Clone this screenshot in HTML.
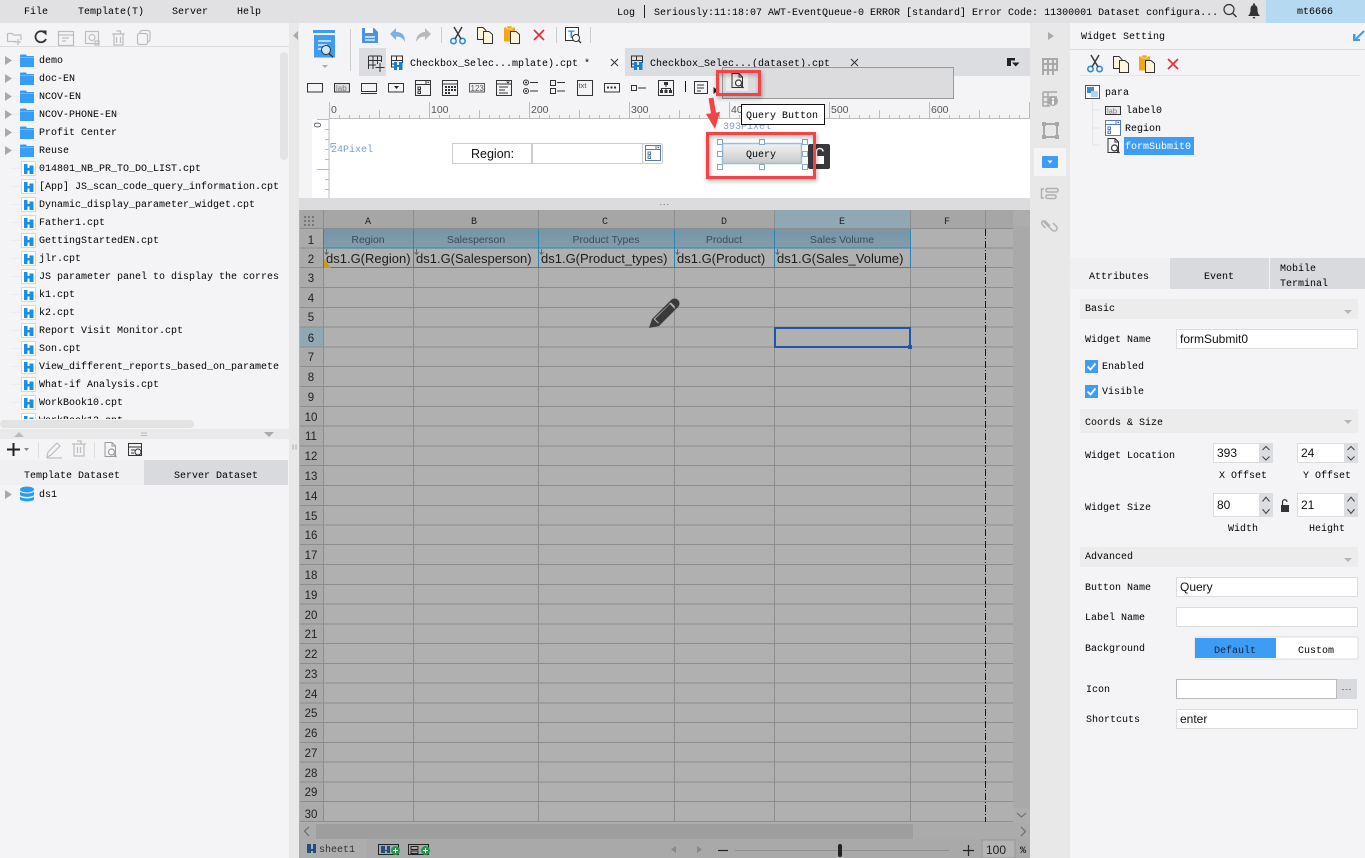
<!DOCTYPE html>
<html><head><meta charset="utf-8"><title>Designer</title>
<style>
html,body{margin:0;padding:0;width:1365px;height:858px;overflow:hidden;background:#f4f4f7}
svg{display:block;position:absolute;left:0;top:0}
.m{font-family:"Liberation Mono",monospace;font-size:10px;fill:#000;white-space:pre;transform:translateY(-1px)}
.s{font-family:"Liberation Sans",sans-serif;font-size:12px;fill:#111}
.r{font-family:"Liberation Sans",sans-serif;font-size:11.5px;fill:#222;text-anchor:middle}
.h{font-family:"Liberation Sans",sans-serif;font-size:10.5px;fill:#3b4c60;text-anchor:middle}
.c{font-family:"Liberation Sans",sans-serif;font-size:13px;fill:#1c1c1c}
.g{fill:none;stroke:#bdbdbd;stroke-width:1.2}
.g2{fill:none;stroke:#a8a8a8;stroke-width:2}
.sh{filter:drop-shadow(1px 2px 2px rgba(0,0,0,.35))}
</style></head><body>
<svg width="1365" height="858" viewBox="0 0 1365 858" xmlns="http://www.w3.org/2000/svg">
<defs>
<pattern id="tx" x="329" y="102" width="100" height="17" patternUnits="userSpaceOnUse">
<path d="M.5 0V17M10.5 13V17M20.5 13V17M30.5 13V17M40.5 13V17M50.5 8V17M60.5 13V17M70.5 13V17M80.5 13V17M90.5 13V17" stroke="#bbb" fill="none"/>
</pattern>
<pattern id="ty" x="312" y="119" width="17" height="50" patternUnits="userSpaceOnUse">
<path d="M13 .5H17M13 10.5H17M13 20.5H17M13 30.5H17M13 40.5H17" stroke="#bbb" fill="none"/><path d="M5 .5H17" stroke="#bbb"/>
</pattern>
<g id="fold"><path d="M0 2.5a1 1 0 0 1 1-1h5l1 1.5h6.500a.5 .5 0 0 1 .5 .5V14H0z" fill="#379df5"/><path d="M0 4.500H14" stroke="#8ccaf9" stroke-width=".7"/></g>
<path id="tri" d="M0 0L7 4.500L0 9z" fill="#a9a9a9"/>
<g id="cpt"><rect x=".5" y=".5" width="14" height="14" fill="#fff" stroke="#d8d8d8"/><path d="M3 3H6.500V7H8.500V4.500H12.500V13H8.500V9.500H6.500V13H3z" fill="#1b8fe8"/></g>
<g id="qry"><path d="M1 .5H8L11.500 4V14.500H1z" fill="none" stroke="#333"/><path d="M8 .5V4H11.500" fill="none" stroke="#333"/><circle cx="7.500" cy="10" r="3" fill="#fff" stroke="#333" stroke-width="1.200"/><path d="M9.800 12.300L12.500 15" stroke="#333" stroke-width="1.400"/></g>
<g id="cut"><circle cx="3.500" cy="14" r="2.700" fill="none" stroke="#2e8be0" stroke-width="1.600"/><circle cx="12.500" cy="14" r="2.700" fill="none" stroke="#2e8be0" stroke-width="1.600"/><path d="M5 12L12 0M11 12L4 0" stroke="#3c3c3c" stroke-width="1.500" fill="none"/></g>
<g id="copy"><path d="M.5 .5H6L9 3.500V12.500H.5z" fill="#fff6df" stroke="#333"/><path d="M6.500 4.500H12L15.500 7.500V16.500H6.500z" fill="#fff6df" stroke="#333"/></g>
<g id="paste"><rect x="0" y="1.500" width="11" height="14" fill="#f3a712"/><rect x="3" y="0" width="5" height="3" fill="#f3a712" stroke="#fff" stroke-width=".5"/><path d="M6.500 5.500H12L15.500 8.500V17.500H6.500z" fill="#fff6df" stroke="#333"/></g>
<path id="x" d="M1 1L11 11M11 1L1 11" stroke="#ee2b2b" stroke-width="1.600" fill="none"/>
<g id="sp"><rect width="14" height="20" fill="#dcdde0"/><path d="M3.500 7L7 3.500L10.500 7M3.500 13.500L7 17L10.500 13.500" stroke="#444" fill="none"/></g>
<g id="wid"><rect x=".5" y=".5" width="15" height="15" fill="#fff" stroke="#5a7cad"/><path d="M.5 4.500H15.500M11 .5V4.500" stroke="#5a7cad" fill="none"/><path d="M12 1.800H14.500L13.250 3.400z" fill="#2c4f88"/><rect x="3" y="7" width="2.500" height="2.500" fill="none" stroke="#5a7cad"/><rect x="3" y="11" width="2.500" height="2.500" fill="none" stroke="#5a7cad"/></g>
<g id="hd"><rect width="5" height="5" x=".5" y=".5" fill="#fff" stroke="#88a8c8"/></g>
<g id="chk"><rect width="13" height="13" fill="#3f9cf5"/><path d="M2.500 6.500L5.500 9.500L10.500 3.500" stroke="#fff" stroke-width="1.800" fill="none"/></g>
</defs>

<!-- base -->
<rect width="1365" height="858" fill="#f4f4f7"/>
<rect width="1266" height="23" fill="#e1e1e3"/>
<rect x="1266" width="99" height="23" fill="#b5d9f0"/>
<rect x="289" y="23" width="10" height="835" fill="#e8e8e8"/>
<rect x="1030" y="23" width="40" height="835" fill="#e8e8e8"/>

<!-- menu -->
<text class="m" x="24" y="15">File</text><text class="m" x="78" y="15">Template(T)</text><text class="m" x="172" y="15">Server</text><text class="m" x="237" y="15">Help</text>
<text class="m" x="617" y="16">Log</text><path d="M644.500 5V18" stroke="#222"/>
<text class="m" x="654" y="16">Seriously:11:18:07 AWT-EventQueue-0 ERROR [standard] Error Code: 11300001 Dataset configura...</text>
<circle cx="1229" cy="9.500" r="5" fill="none" stroke="#333" stroke-width="1.200"/><path d="M1233 13.500L1236.500 17" stroke="#333" stroke-width="1.400"/>
<path d="M1248 16H1260C1258 14 1257.500 12 1257.500 9C1257.500 6.500 1256 5 1254 5C1252 5 1250.500 6.500 1250.500 9C1250.500 12 1250 14 1248 16zM1252.500 17H1255.500L1254 19zM1253 3.500H1255V5H1253z" fill="#333"/>
<text class="m" x="1297" y="15">mt6666</text>

<!-- left toolbar -->
<path d="M293 35.500L298 31V40z" fill="#aaa"/>
<g class="g">
<path d="M7.500 33.500H12L13.500 35H21V40M7.500 33.500V41.500H16M18 39V45M15 42H21"/>
<rect x="58.500" y="31.500" width="15" height="14"/><path d="M58.500 35H73.500M62 38H69M62 41H66"/>
<rect x="85.500" y="31.500" width="13" height="12"/><circle cx="92" cy="37.500" r="3"/><rect x="95" y="41" width="4" height="4"/>
<path d="M112 34H125M114 34V45H123V34M116.500 31H120.500V34M116.500 37V43M120.500 37V43"/>
<rect x="140" y="30.500" width="10" height="11" rx="2"/><rect x="137.500" y="33.500" width="10" height="11" rx="2" fill="#f4f4f7"/>
</g>
<path d="M45 33A5.500 5.500 0 1 0 46 39" fill="none" stroke="#333" stroke-width="1.800"/><path d="M41.500 30.500H46.500V35.500z" fill="#333"/>
<rect x="0" y="46" width="289" height="1" fill="#dcdcdc"/>

<!-- tree -->
<path d="M13 60.500H20M13 78.500H20M13 96.500H20M13 114.500H20M13 132.500H20M13 150.500H20M10 168.500H21M10 186.500H21M10 204.500H21M10 222.500H21M10 240.500H21M10 258.500H21M10 276.500H21M10 294.500H21M10 312.500H21M10 330.500H21M10 348.500H21M10 366.500H21M10 384.500H21M10 402.500H21" stroke="#ececee" fill="none"/>
<use href="#tri" x="5" y="56"/><use href="#tri" x="5" y="74"/><use href="#tri" x="5" y="92"/><use href="#tri" x="5" y="110"/><use href="#tri" x="5" y="128"/><use href="#tri" x="5" y="146"/>
<use href="#fold" x="20" y="53"/><use href="#fold" x="20" y="71"/><use href="#fold" x="20" y="89"/><use href="#fold" x="20" y="107"/><use href="#fold" x="20" y="125"/><use href="#fold" x="20" y="143"/>
<text class="m" x="39" y="64">demo</text><text class="m" x="39" y="82">doc-EN</text><text class="m" x="39" y="100">NCOV-EN</text><text class="m" x="39" y="118">NCOV-PHONE-EN</text><text class="m" x="39" y="136">Profit Center</text><text class="m" x="39" y="154">Reuse</text>
<use href="#cpt" x="21" y="161"/><use href="#cpt" x="21" y="179"/><use href="#cpt" x="21" y="197"/><use href="#cpt" x="21" y="215"/><use href="#cpt" x="21" y="233"/><use href="#cpt" x="21" y="251"/><use href="#cpt" x="21" y="269"/><use href="#cpt" x="21" y="287"/><use href="#cpt" x="21" y="305"/><use href="#cpt" x="21" y="323"/><use href="#cpt" x="21" y="341"/><use href="#cpt" x="21" y="359"/><use href="#cpt" x="21" y="377"/><use href="#cpt" x="21" y="395"/><use href="#cpt" x="21" y="413"/>
<text class="m" x="39" y="172">014801_NB_PR_TO_DO_LIST.cpt</text>
<text class="m" x="39" y="190">[App] JS_scan_code_query_information.cpt</text>
<text class="m" x="39" y="208">Dynamic_display_parameter_widget.cpt</text>
<text class="m" x="39" y="226">Father1.cpt</text>
<text class="m" x="39" y="244">GettingStartedEN.cpt</text>
<text class="m" x="39" y="262">jlr.cpt</text>
<text class="m" x="39" y="280">JS parameter panel to display the corres</text>
<text class="m" x="39" y="298">k1.cpt</text>
<text class="m" x="39" y="316">k2.cpt</text>
<text class="m" x="39" y="334">Report Visit Monitor.cpt</text>
<text class="m" x="39" y="352">Son.cpt</text>
<text class="m" x="39" y="370">View_different_reports_based_on_paramete</text>
<text class="m" x="39" y="388">What-if Analysis.cpt</text>
<text class="m" x="39" y="406">WorkBook10.cpt</text>
<text class="m" x="39" y="424">WorkBook12.cpt</text>
<rect x="279" y="47" width="10" height="373" fill="#f4f4f7"/>
<rect x="280" y="52" width="8" height="108" rx="4" fill="#e3e3e3"/>
<rect x="0" y="419" width="289" height="10" fill="#f4f4f7"/>
<rect x="0" y="420" width="194" height="8" rx="4" fill="#e3e3e3"/>
<rect x="0" y="429" width="289" height="10" fill="#e9e9e9"/>
<path d="M14 437L19 432L24 437z" fill="#bbb"/><path d="M264 432H274L269 437z" fill="#aaa"/><path d="M141 433H147M141 435.500H147" stroke="#bbb"/>
<path d="M293 444.500V449.500M296 444.500V449.500" stroke="#aaa"/>

<!-- dataset toolbar -->
<path d="M7 449.500H20M13.500 443V456" stroke="#222" stroke-width="2"/><path d="M24 448H29L26.500 451z" fill="#888"/>
<path d="M38.500 442V458" stroke="#ddd"/><path d="M94.500 442V458" stroke="#ddd"/>
<path class="g" d="M47 457L48 452L57 443L60 446L51 455zM47 458H62" stroke-width="1.500"/>
<path class="g" d="M72 444H86M74 444V456H84V444M77 441H81V444M77.500 447V453M80.500 447V453"/>
<g transform="translate(104,442)" opacity=".45"><use href="#qry"/></g>
<rect x="128.500" y="443.500" width="13" height="12" fill="none" stroke="#333"/><path d="M128.500 447H141.500M131 450H135M131 453H134" stroke="#333" fill="none"/><circle cx="138" cy="452" r="3" fill="#f4f4f7" stroke="#333"/>

<!-- dataset tabs -->
<rect x="0" y="460" width="144" height="25" fill="#f0f0f2"/><rect x="144" y="460" width="144" height="25" fill="#d9dadd"/>
<text class="m" x="24" y="479">Template Dataset</text><text class="m" x="174" y="479">Server Dataset</text>
<use href="#tri" x="5" y="490"/>
<g fill="#2d9bee"><ellipse cx="27" cy="489.500" rx="7" ry="3"/><path d="M20 491.500C22 494 32 494 34 491.500V495C32 497.500 22 497.500 20 495z"/><path d="M20 496.500C22 499 32 499 34 496.500V499.500C32 502 22 502 20 499.500z"/></g>
<text class="m" x="39" y="498">ds1</text>

<!-- top toolbar of editor -->
<rect x="313" y="30" width="22" height="3" fill="#3f9cf5"/>
<path d="M314 35H335V57.500H314z" fill="#3f9cf5"/>
<path d="M318 41H331M318 45H327M318 49H325" stroke="#fff" stroke-width="1.300"/>
<circle cx="326" cy="50" r="4.500" fill="#cfe5fa" stroke="#333"/><path d="M329 53.500L333 57.500" stroke="#333" stroke-width="1.400"/>
<path d="M322 65H328L325 68z" fill="#aaa"/>
<path d="M350.500 29V71" stroke="#ccc"/>
<path d="M362 28H374L378 32V43H362z" fill="#4d94e0"/><rect x="365" y="28" width="8" height="5" fill="#fff"/><path d="M365 37H375M365 40H375" stroke="#fff" stroke-width="1.200"/>
<path d="M390 34L396 28V32C403 32 405 36 405 42C403 38 400 36.500 396 36.500V40z" fill="#7fb0e4"/>
<path d="M431 34L425 28V32C420 32 416 36 416 42C418 38 421 36.500 425 36.500V40z" fill="#b9b9b9"/>
<path d="M441.500 27V43" stroke="#ccc"/>
<use href="#cut" x="450" y="27"/><use href="#copy" x="477" y="27"/><use href="#paste" x="504" y="26"/>
<use href="#x" x="533" y="29"/>
<path d="M556.500 27V43" stroke="#ccc"/>
<rect x="565.500" y="27.500" width="13" height="13" fill="#fff" stroke="#333"/><text x="568" y="38" font-family="Liberation Sans" font-size="11" font-weight="bold" fill="#2d8ee0">T</text><circle cx="576" cy="38" r="3.500" fill="#fff" stroke="#333"/><path d="M578.500 40.500L581 43" stroke="#333" stroke-width="1.300"/>
<path d="M590.500 27V43" stroke="#ccc"/>

<!-- tabs -->
<rect x="359" y="48" width="671" height="28" fill="#dcdde0"/>
<rect x="386" y="48" width="239" height="28" fill="#f4f4f7"/>
<path d="M368.500 56H381.500M368.500 60.500H381.500M368.500 65H376M368.500 56V69M373 56V69M377.500 56V64M381.500 56V62" stroke="#333" fill="none"/><path d="M380 63V72M375.500 67.500H384.500" stroke="#333"/>
<g id="tabi"><path d="M391.500 56H402.500V60.500H391.500zM391.500 60.500V67H396M402.500 60.500V63M396.500 56V60.500M391.500 64H395" stroke="#333" fill="none"/><path d="M394 62H397V65H399V62H402.500V70H399V67H397V70H394z" fill="#1b7fcf"/></g>
<use href="#tabi" x="240"/>
<text class="m" x="410" y="67">Checkbox_Selec...mplate).cpt *</text>
<path d="M611 59L618 66M618 59L611 66" stroke="#333"/>
<text class="m" x="650" y="67">Checkbox_Selec...(dataset).cpt</text>
<path d="M851 59L858 66M858 59L851 66" stroke="#333"/>
<path d="M1007 58H1015V60.500H1011V66H1007z" fill="#222"/><path d="M1012 62.500H1019.500L1015.750 66.500z" fill="#222"/>

<!-- widget row -->
<rect x="307.500" y="83.500" width="15" height="8.500" fill="none" stroke="#333"/>
<rect x="334.500" y="83.500" width="15" height="8.500" fill="#dedede" stroke="#333"/><text x="336" y="91" font-family="Liberation Sans" font-size="8" fill="#777">lab</text>
<rect x="361.500" y="83.500" width="15" height="8" fill="none" stroke="#333"/><path d="M361 93.500H377" stroke="#333"/>
<rect x="388.500" y="83.500" width="15" height="8.500" fill="none" stroke="#333"/><path d="M394 86H399L396.500 89z" fill="#222"/>
<rect x="415.500" y="80.500" width="15" height="15" fill="none" stroke="#333"/><path d="M415.500 84.500H430.500M426 80.500V84.500" stroke="#333" fill="none"/><path d="M427 81.800H429.500L428.250 83.400z" fill="#333"/><rect x="418" y="87" width="2.500" height="2.500" fill="none" stroke="#333"/><rect x="418" y="91" width="2.500" height="2.500" fill="none" stroke="#333"/>
<rect x="442.500" y="80.500" width="15" height="15" fill="none" stroke="#333"/><path d="M442.500 84H457.500" stroke="#333"/><g fill="#333"><rect x="445" y="86" width="2" height="2"/><rect x="448" y="86" width="2" height="2"/><rect x="451" y="86" width="2" height="2"/><rect x="454" y="86" width="2" height="2"/><rect x="445" y="89" width="2" height="2"/><rect x="448" y="89" width="2" height="2"/><rect x="451" y="89" width="2" height="2"/><rect x="454" y="89" width="2" height="2"/><rect x="445" y="92" width="2" height="2"/><rect x="448" y="92" width="2" height="2"/></g>
<rect x="469.500" y="83.500" width="15" height="8.500" fill="none" stroke="#555"/><text x="470.500" y="91" font-family="Liberation Sans" font-size="8" fill="#555">123</text>
<rect x="496.500" y="80.500" width="15" height="15" fill="none" stroke="#333"/><path d="M496.500 84H511.500M499 87H508M499 90H505M499 93H508" stroke="#333"/><path d="M506 81.500H510L508 83.500z" fill="#333"/>
<circle cx="526" cy="82.500" r="2.500" fill="none" stroke="#333"/><circle cx="526" cy="91" r="2.500" fill="none" stroke="#333"/><circle cx="526" cy="82.500" r="1" fill="#333"/><circle cx="526" cy="91" r="1" fill="#333"/><path d="M530 82.500H538M530 91H538" stroke="#333"/>
<rect x="550.500" y="80.500" width="5" height="5" fill="none" stroke="#333"/><rect x="550.500" y="88.500" width="5" height="5" fill="none" stroke="#333"/><path d="M557 82.500H565M557 91H565" stroke="#333"/>
<rect x="577.500" y="80.500" width="15" height="15" fill="none" stroke="#333"/><text x="578.500" y="88" font-family="Liberation Sans" font-size="7.500" fill="#555">txt</text>
<rect x="604.500" y="83.500" width="15" height="8.500" fill="none" stroke="#333"/><path d="M607 87.500H617" stroke="#333" stroke-width="2" stroke-dasharray="2 1.500"/>
<rect x="631.500" y="85.500" width="5" height="5" fill="none" stroke="#333"/><path d="M638 88H646" stroke="#333"/>
<rect x="658.500" y="80.500" width="15" height="15" fill="none" stroke="#333"/><path d="M666 83V87M661.500 91V88.500H670.500V91M666 88V91" stroke="#333" fill="none"/><rect x="664" y="82" width="4" height="3" fill="#333"/><rect x="660" y="90" width="3" height="3" fill="#333"/><rect x="664.500" y="90" width="3" height="3" fill="#333"/><rect x="669" y="90" width="3" height="3" fill="#333"/>
<path d="M685.500 81V92" stroke="#111"/>
<rect x="694.500" y="81.500" width="13" height="12" fill="none" stroke="#333"/><path d="M697 85H704M697 88H704M697 91H701" stroke="#333"/><path d="M713.500 87L718 90.500L713.500 94z" fill="#222"/>

<!-- ruler + canvas -->
<rect x="312" y="102" width="718" height="96" fill="#fff"/>
<rect x="300" y="102" width="730" height="17" fill="#f4f4f7"/>
<rect x="300" y="119" width="12" height="79" fill="#f4f4f7"/>
<rect x="329" y="102" width="701" height="17" fill="url(#tx)"/>
<rect x="312" y="119" width="17" height="79" fill="url(#ty)"/>
<path d="M329 118.500H1030M329 118.500V198" stroke="#bdbdbd" fill="none"/>
<g font-family="Liberation Sans" font-size="10.500" fill="#555"><text x="331" y="113">0</text><text x="431" y="113">100</text><text x="531" y="113">200</text><text x="631" y="113">300</text><text x="731" y="113">400</text><text x="831" y="113">500</text><text x="931" y="113">600</text></g>
<text transform="translate(321,125) rotate(-90)" font-family="Liberation Sans" font-size="10" fill="#555" text-anchor="middle">0</text>
<path d="M331 143.500H336M331 143.500V148" stroke="#88a8c8" fill="none"/>
<text class="m" x="331" y="153" style="fill:#7f9fc0">24Pixel</text>
<text class="m" x="723" y="130" style="fill:#7f9fc0">393Pixel</text>

<rect x="452.500" y="143.500" width="79" height="20" fill="#fff" stroke="#ccc"/>
<text x="471" y="158" font-family="Liberation Sans" font-size="12.500" fill="#111">Region:</text>
<rect x="532.500" y="143.500" width="110" height="20" fill="#fff" stroke="#ccc"/>
<rect x="642.500" y="143.500" width="20" height="20" rx="2" fill="#fff" stroke="#ccc"/>
<use href="#wid" x="645" y="145"/>

<!-- query button -->
<defs><linearGradient id="qb" x1="0" y1="0" x2="0" y2="1"><stop offset="0" stop-color="#f2f2f2"/><stop offset="1" stop-color="#c9c9c9"/></linearGradient></defs>
<rect x="722.500" y="143.500" width="79" height="20" fill="url(#qb)" stroke="#8fc0f0" stroke-width="1.500"/>
<text class="m" x="746" y="158">Query</text>
<use href="#hd" x="717" y="139"/><use href="#hd" x="759" y="139"/><use href="#hd" x="802" y="139"/><use href="#hd" x="717" y="151"/><use href="#hd" x="802" y="151"/><use href="#hd" x="717" y="164"/><use href="#hd" x="759" y="164"/><use href="#hd" x="802" y="164"/>
<rect x="808" y="144" width="22" height="25" rx="2" fill="#38393b"/>
<path d="M815 156H824V164H815z" fill="#fff"/><path d="M816.500 156V151.500C816.500 147.500 823 147.500 823 151.500" fill="none" stroke="#fff" stroke-width="1.500"/>
<rect class="sh" x="707.500" y="133.500" width="107" height="44" fill="none" stroke="#f24444" stroke-width="3"/>

<!-- popup + tooltip -->
<rect x="722.500" y="67.500" width="231" height="31" fill="#dcdcde" stroke="#999"/>
<rect x="726" y="72" width="22" height="19" fill="#ececee"/>
<use href="#qry" x="731" y="73"/>
<rect class="sh" x="717.500" y="71.500" width="42" height="23" fill="none" stroke="#f24444" stroke-width="3"/>
<rect x="741.500" y="104.500" width="83" height="20" fill="#fff" stroke="#111"/>
<text class="m" x="746" y="119">Query Button</text>
<path d="M711 98L714 116" stroke="#f24444" stroke-width="5"/><path d="M706 114L720 112L715 129z" fill="#f24444"/>

<!-- divider -->
<rect x="299" y="198" width="731" height="12" fill="#dcdcde"/>
<path d="M660 204.500H661.500M663.500 204.500H665M667 204.500H668.500" stroke="#999"/>

<!-- sheet -->
<rect x="299" y="210" width="731" height="648" fill="#b0b0b0"/>
<rect x="300" y="210" width="713" height="19" fill="#a6a6a6"/>
<rect x="300" y="229" width="23" height="593" fill="#aaa"/>
<rect x="774" y="210" width="136" height="19" fill="#8fa8b4"/>
<rect x="300" y="327" width="23" height="20" fill="#8fa8b4"/>
<g fill="#777"><rect x="304" y="216" width="2" height="2"/><rect x="308" y="216" width="2" height="2"/><rect x="312" y="216" width="2" height="2"/><rect x="304" y="220" width="2" height="2"/><rect x="308" y="220" width="2" height="2"/><rect x="312" y="220" width="2" height="2"/><rect x="304" y="224" width="2" height="2"/><rect x="308" y="224" width="2" height="2"/><rect x="312" y="224" width="2" height="2"/></g>
<defs><linearGradient id="hg" x1="0" y1="0" x2="0" y2="1"><stop offset="0" stop-color="#7595aa"/><stop offset="1" stop-color="#849ca9"/></linearGradient></defs>
<rect x="323" y="229" width="587" height="19" fill="url(#hg)"/>
<path d="M300 228.500H1013M300 248H1013M300 267.500H1013M300 287.500H1013M300 307.500H1013M300 327H1013M300 347H1013M300 366.500H1013M300 386.500H1013M300 406.500H1013M300 426H1013M300 446H1013M300 465.500H1013M300 485.500H1013M300 505.500H1013M300 525H1013M300 544.500H1013M300 564.500H1013M300 584.500H1013M300 604H1013M300 624H1013M300 643.500H1013M300 663.500H1013M300 683H1013M300 703H1013M300 722.500H1013M300 742.500H1013M300 762H1013M300 782H1013M300 801.500H1013M300 821.500H1013" stroke="#8d8d8d" fill="none"/>
<path d="M323.500 210V822M413.500 210V822M538.500 210V822M674.500 210V822M774.500 210V822M910.500 210V822M985.500 210V229" stroke="#8d8d8d" fill="none"/>
<path d="M985.500 229V822" stroke="#111" stroke-dasharray="7 2 1 2" fill="none"/>
<path d="M323.500 229V267.500M413.500 229V267.500M538.500 229V267.500M674.500 229V267.500M774.500 229V267.500M910.500 229V267.500M323 248H911M323 267.500H911" stroke="#2a86b2" fill="none"/>
<rect x="775" y="328" width="135" height="19" fill="none" stroke="#1f56a8" stroke-width="2"/><rect x="908" y="345" width="4" height="4" fill="#1f56a8"/>
<path d="M324 268V259L331 268z" fill="#c79c1e"/>
<path d="M326.500 249V254M324.500 252L326.500 254.500L328.500 252M416.500 249V254M414.500 252L416.500 254.500L418.500 252M541.500 249V254M539.500 252L541.500 254.500L543.500 252M677.500 249V254M675.500 252L677.500 254.500L679.500 252M777.500 249V254M775.500 252L777.500 254.500L779.500 252" stroke="#666" fill="none"/>
<g font-family="Liberation Mono" font-size="10" fill="#222" text-anchor="middle"><text x="368" y="224">A</text><text x="474" y="224">B</text><text x="605" y="224">C</text><text x="724" y="224">D</text><text x="842" y="224">E</text><text x="947" y="224">F</text></g>
<text class="h" x="368" y="243">Region</text><text class="h" x="476" y="243">Salesperson</text><text class="h" x="606" y="243">Product Types</text><text class="h" x="724" y="243">Product</text><text class="h" x="842" y="243">Sales Volume</text>
<text class="c" x="326" y="263">ds1.G(Region)</text><text class="c" x="416" y="263">ds1.G(Salesperson)</text><text class="c" x="541" y="263">ds1.G(Product_types)</text><text class="c" x="677" y="263">ds1.G(Product)</text><text class="c" x="777" y="263">ds1.G(Sales_Volume)</text>
<g>
<text class="r" x="311" y="244">1</text><text class="r" x="311" y="263">2</text><text class="r" x="311" y="282">3</text><text class="r" x="311" y="302">4</text><text class="r" x="311" y="321">5</text><text class="r" x="311" y="342">6</text><text class="r" x="311" y="361">7</text><text class="r" x="311" y="381">8</text><text class="r" x="311" y="401">9</text><text class="r" x="311" y="421">10</text><text class="r" x="311" y="440">11</text><text class="r" x="311" y="460">12</text><text class="r" x="311" y="480">13</text><text class="r" x="311" y="500">14</text><text class="r" x="311" y="520">15</text><text class="r" x="311" y="539">16</text><text class="r" x="311" y="559">17</text><text class="r" x="311" y="579">18</text><text class="r" x="311" y="599">19</text><text class="r" x="311" y="619">20</text><text class="r" x="311" y="638">21</text><text class="r" x="311" y="658">22</text><text class="r" x="311" y="678">23</text><text class="r" x="311" y="698">24</text><text class="r" x="311" y="717">25</text><text class="r" x="311" y="737">26</text><text class="r" x="311" y="757">27</text><text class="r" x="311" y="777">28</text><text class="r" x="311" y="796">29</text><text class="r" x="311" y="818">30</text>
</g>
<!-- pencil -->
<path d="M649 328L652 319L671 300C673 298 676 298 678 300C680 302 680 305 678 307L659 326z" fill="#3a3a3a"/><path d="M653.500 319L658 323.500L675 306.500L671 302.500z" fill="#b0b0b0"/><path d="M655 319L670 304L674 308L659 323z" fill="#3a3a3a"/><path d="M669.500 303L675 308.500" stroke="#b0b0b0"/>

<!-- scrollbars -->
<rect x="1013" y="210" width="17" height="613" fill="#adadad"/>
<rect x="1013" y="226" width="17" height="582" fill="#a9a9a9"/>
<path d="M1017 813L1021.500 817L1026 813" stroke="#666" fill="none"/>
<rect x="299" y="823" width="731" height="16" fill="#ababab"/>
<rect x="316" y="824" width="597" height="15" fill="#9e9e9e"/>
<path d="M309 827L304.500 831L309 836" stroke="#666" fill="none"/><path d="M1021 827L1025.500 831.500L1021 836" stroke="#666" fill="none"/>
<rect x="299" y="839" width="731" height="19" fill="#a9a9a9"/>
<rect x="300" y="839" width="66" height="19" fill="#adadad"/>
<path d="M307 844H311V849H313V844H316V853H313V851H311V853H307z" fill="#1f4f80"/>
<text class="m" x="319" y="853" style="fill:#333">sheet1</text>
<rect x="378.500" y="844.500" width="20" height="10" fill="none" stroke="#222"/><path d="M381 846H385V850H387V846H390V853H387V851H385V853H381z" fill="#1f4f80"/><circle cx="395.500" cy="850.500" r="4.500" fill="#18a048"/><path d="M393 850.500H398M395.500 848V853" stroke="#fff"/>
<rect x="408.500" y="844.500" width="20" height="10" fill="none" stroke="#222"/><path d="M411 846.500H418V849.500H411zM411 851H418V853.500H411z" fill="none" stroke="#222"/><circle cx="425.500" cy="850.500" r="4.500" fill="#18a048"/><path d="M423 850.500H428M425.500 848V853" stroke="#fff"/>
<path d="M676 846L671 849.500L676 853z" fill="#888"/><path d="M697 846L702 849.500L697 853z" fill="#888"/>
<path d="M718 850.500H728" stroke="#222" stroke-width="1.200"/>
<path d="M735 850.500H949" stroke="#8f8f8f"/>
<rect x="838" y="844" width="4" height="13" rx="2" fill="#222"/>
<path d="M963 850.500H974M968.500 845V856" stroke="#222" stroke-width="1.200"/>
<rect x="982" y="840" width="33" height="18" fill="#b4b4b4" stroke="#999"/>
<text x="986" y="854" font-family="Liberation Sans" font-size="12" fill="#222">100</text>
<text class="m" x="1020" y="854" style="font-weight:bold;fill:#222">%</text>

<!-- right strip -->
<path d="M1048 32L1054 36L1048 40z" fill="#aaa"/>
<g class="g2">
<path d="M1043 59H1057V70H1043zM1043 64H1057M1048 59V75M1053 59V75M1043 70V75"/>
<path d="M1043 92H1057M1043 92V106H1050M1048 92V106M1043 97H1057M1043 102H1050" stroke-width="1.500"/>
<rect x="1044" y="124" width="13" height="13"/>
</g>
<circle cx="1053" cy="101" r="5" fill="#a8a8a8"/><rect x="1052" y="98" width="2" height="1.500" fill="#fff"/><rect x="1052" y="100.500" width="2" height="4" fill="#fff"/>
<path d="M1042 122H1046V126H1042zM1055 122H1059V126H1055zM1042 135H1046V139H1042zM1055 135H1059V139H1055z" fill="#a8a8a8"/>
<rect x="1034" y="148" width="32" height="28" fill="#f4f4f7"/>
<rect x="1042" y="156" width="16" height="12" rx="1" fill="#3f9cf5"/><path d="M1047.500 160.500H1052.500L1050 163.500z" fill="#fff"/>
<g fill="none" stroke="#b0b0b0" stroke-width="1.500"><path d="M1044 189H1041.500V198H1044"/><rect x="1046" y="188.500" width="12" height="3.500" rx="1.500"/><rect x="1046" y="195" width="10" height="3.500" rx="1.500"/><path d="M1044 222L1052 230C1055 233 1059 229 1056 226L1053 223M1050 226L1046 222C1043 219 1040 222.500 1043 225.500L1045.500 228"/></g>

<!-- right panel -->
<text class="m" x="1081" y="40">Widget Setting</text>
<path d="M1364 31L1356 39" stroke="#3f9cf5" stroke-width="2"/><path d="M1353 34V41H1360V39H1355.500V34z" fill="#3f9cf5"/>
<rect x="1070" y="49" width="295" height="1" fill="#dcdcdc"/>
<use href="#cut" x="1087" y="55"/><use href="#copy" x="1113" y="56"/><use href="#paste" x="1139" y="55"/><use href="#x" x="1167" y="58"/>
<rect x="1080" y="75" width="280" height="1" fill="#e4e4e4"/>
<rect x="1085.500" y="85.500" width="14" height="13" fill="#fff" stroke="#555"/><rect x="1087" y="87" width="7" height="6" fill="#3a8fc8"/><rect x="1091" y="91" width="7" height="6" fill="#b3d3f0"/>
<text class="m" x="1105" y="96">para</text>
<path d="M1092.500 100V145H1100M1092.500 110H1100M1092.500 128H1100" stroke="#e4e4e4" fill="none"/>
<rect x="1105.500" y="106.500" width="15" height="8" fill="#e9e9e9" stroke="#333"/><text x="1107" y="113.500" font-family="Liberation Sans" font-size="7.500" fill="#777">lab</text>
<text class="m" x="1126" y="114">label0</text>
<use href="#wid" x="1105" y="120"/>
<text class="m" x="1125" y="132">Region</text>
<use href="#qry" x="1107" y="138"/>
<rect x="1124" y="137" width="70" height="18" fill="#3f9cf5"/>
<text class="m" x="1125" y="150" style="fill:#fff">formSubmit0</text>

<!-- attribute tabs -->
<rect x="1070" y="258" width="100" height="31" fill="#f0f0f2"/>
<rect x="1170" y="258" width="99" height="31" fill="#d9dadd"/>
<rect x="1270" y="258" width="95" height="31" fill="#d9dadd"/>
<text class="m" x="1089" y="280">Attributes</text><text class="m" x="1204" y="280">Event</text><text class="m" x="1280" y="272">Mobile</text><text class="m" x="1280" y="287">Terminal</text>

<g fill="#ececed"><rect x="1080" y="299" width="278" height="20"/><rect x="1080" y="409" width="278" height="24"/><rect x="1080" y="547" width="278" height="20"/></g>
<g fill="#b5b5b5"><path d="M1344 310H1352L1348 314z"/><path d="M1344 420H1352L1348 424z"/><path d="M1344 558H1352L1348 562z"/></g>
<text class="m" x="1085" y="312">Basic</text><text class="m" x="1085" y="426">Coords &amp; Size</text><text class="m" x="1085" y="560">Advanced</text>

<g fill="#fff" stroke="#dcdcdc">
<rect x="1176.500" y="329.500" width="181" height="19"/>
<rect x="1213.500" y="443.500" width="46" height="19"/>
<rect x="1297.500" y="443.500" width="47" height="19"/>
<rect x="1213.500" y="493.500" width="46" height="23"/>
<rect x="1297.500" y="493.500" width="47" height="23"/>
<rect x="1176.500" y="577.500" width="181" height="19"/>
<rect x="1176.500" y="607.500" width="181" height="19"/>
<rect x="1176.500" y="709.500" width="181" height="19"/>
</g>
<rect x="1176.500" y="679.500" width="160" height="19" fill="#fff" stroke="#bbb"/>
<rect x="1337" y="679" width="20" height="20" fill="#d9dadd"/><path d="M1342 689.500H1344M1345.500 689.500H1347.500M1349 689.500H1351" stroke="#888"/>
<use href="#sp" x="1259" y="443"/><use href="#sp" x="1344" y="443"/>
<g transform="translate(1259,493) scale(1,1.200)"><use href="#sp"/></g><g transform="translate(1344,493) scale(1,1.200)"><use href="#sp"/></g>
<rect x="1195" y="637" width="163" height="22" fill="#fff" stroke="#dcdcdc"/>
<rect x="1195" y="638" width="81" height="20" fill="#3f9cf5"/>
<text class="m" x="1214" y="654" style="fill:#10243c">Default</text><text class="m" x="1298" y="654">Custom</text>

<text class="m" x="1085" y="343">Widget Name</text>
<use href="#chk" x="1085" y="360"/><text class="m" x="1102" y="370">Enabled</text>
<use href="#chk" x="1085" y="385"/><text class="m" x="1102" y="395">Visible</text>
<text class="m" x="1085" y="459">Widget Location</text>
<text class="m" x="1219" y="479">X Offset</text><text class="m" x="1303" y="479">Y Offset</text>
<text class="m" x="1085" y="511">Widget Size</text>
<text class="m" x="1228" y="532">Width</text><text class="m" x="1309" y="532">Height</text>
<path d="M1281 505H1289V512H1281z" fill="#333"/><path d="M1282.500 505V502C1282.500 499 1287 499 1287 502" stroke="#333" stroke-width="1.200" fill="none"/>
<text class="m" x="1085" y="591">Button Name</text><text class="m" x="1085" y="621">Label Name</text><text class="m" x="1085" y="652">Background</text><text class="m" x="1086" y="693">Icon</text><text class="m" x="1086" y="723">Shortcuts</text>
<text class="s" x="1180" y="343">formSubmit0</text><text class="s" x="1217" y="457">393</text><text class="s" x="1301" y="457">24</text><text class="s" x="1217" y="509">80</text><text class="s" x="1301" y="509">21</text><text class="s" x="1180" y="591">Query</text><text class="s" x="1180" y="723">enter</text>
</svg>
</body></html>
